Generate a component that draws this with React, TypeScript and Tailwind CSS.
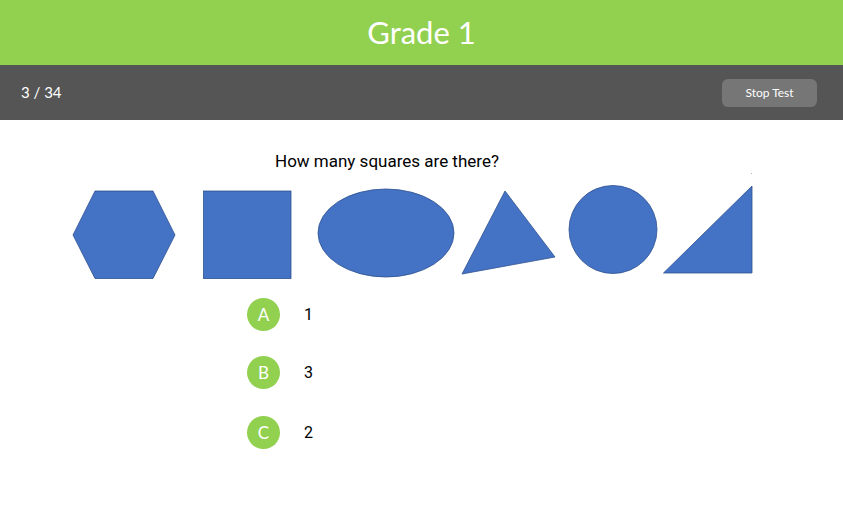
const options = [
  { letter: "A", value: "1", gap: "mt-0" },
  { letter: "B", value: "3", gap: "mt-[25px]" },
  { letter: "C", value: "2", gap: "mt-[27px]" },
];

function Shapes() {
  return (
    <svg width="843" height="112" viewBox="0 170 843 112" className="block">
      <g fill="#4472c4" stroke="#2f528f" strokeWidth="0.8">
        <polygon points="73,235 95,191 153,191 175,235 153,278.5 95,278.5" />
        <rect x="203.5" y="191" width="87.5" height="87.5" />
        <ellipse cx="386" cy="233" rx="68" ry="44" />
        <polygon points="462,274 505,191 555,257" />
        <circle cx="613" cy="229.5" r="44" />
        <polygon points="663.5,273 752,186 752,273" />
      </g>
      <circle cx="751.5" cy="173.5" r="0.6" fill="#9aa8c8" />
    </svg>
  );
}

export default function App() {
  return (
    <div className="min-h-[517px] w-[843px] bg-white" style={{ fontFamily: "Roboto, 'Noto Sans', sans-serif" }}>
      <header className="flex h-[65px] items-center justify-center bg-[#92d050]">
        <h1 className="text-[31px] leading-none text-white" style={{ fontFamily: "Lato, 'Open Sans', sans-serif" }}>
          Grade 1
        </h1>
      </header>

      <div className="flex h-[55px] items-center justify-between bg-[#555555] pl-[21px] pr-[26px]">
        <span className="text-[15px] text-white" style={{ fontFamily: "Lato, sans-serif" }}>
          3 / 34
        </span>
        <button
          className="h-[28px] w-[95px] rounded-[6px] bg-[#767676] text-[12px] text-white"
          style={{ fontFamily: "Lato, sans-serif" }}
        >
          Stop Test
        </button>
      </div>

      <main className="pt-[32px]">
        <p className="pl-[275px] text-[17px] leading-[18px] text-black">How many squares are there?</p>
        <Shapes />
        <ul className="mt-[16px] flex flex-col pl-[247px]">
          {options.map((o) => (
            <li key={o.letter} className={`flex items-center ${o.gap}`}>
              <span
                className="flex h-[33px] w-[33px] items-center justify-center rounded-full bg-[#92d050] text-[17px] text-white"
                style={{ fontFamily: "Lato, sans-serif" }}
              >
                {o.letter}
              </span>
              <span className="ml-[24px] text-[16px] text-black">{o.value}</span>
            </li>
          ))}
        </ul>
      </main>
    </div>
  );
}
